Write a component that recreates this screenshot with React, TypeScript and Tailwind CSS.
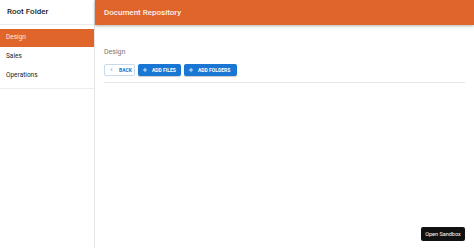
import { ChevronLeft, Plus } from "lucide-react";

const folders = ["Design", "Sales", "Operations"];

const App: React.FC = () => {
  return (
    <div className="relative flex h-[248px] w-[474px] overflow-hidden bg-white font-['Roboto',sans-serif]">
      <div className="flex w-[95px] shrink-0 flex-col border-r border-[#e4e4e4]">
        <div className="flex h-[25px] items-center border-b border-[#ececec] pl-[7px] text-[8px] font-medium text-[#222]">
          Root Folder
        </div>
        <div className="flex flex-col border-b border-[#ececec] pt-[4px] pb-[3px]">
          {folders.map((f, i) => (
            <div
              key={f}
              className={
                i === 0
                  ? "flex h-[18px] items-center bg-[#e0652a] pl-[6px] text-[6.5px] text-[#ffe9dc]"
                  : "flex h-[19px] items-center pl-[6px] text-[6.5px] text-[#222]"
              }
            >
              {f}
            </div>
          ))}
        </div>
      </div>

      <div className="flex flex-1 flex-col">
        <div className="flex h-[25px] items-center bg-[#e0652a] pl-[9px] text-[8px] font-medium text-[#fff3ea] shadow-[0_1px_3px_rgba(0,0,0,0.3)]">
          Document Repository
        </div>
        <div className="flex flex-col px-[9px] pt-[22px]">
          <div className="text-[7px] text-[#777]">Design</div>
          <div className="mt-[6px] flex gap-[3px] border-b border-[#e6e6e6] pb-[6px]">
            <button className="flex h-[12px] w-[31px] items-center gap-[5px] rounded-[2px] border border-[#c9d9ee] pl-[4px] text-[6px] leading-[12px] font-bold text-[#1976d2]">
              <ChevronLeft size={5} strokeWidth={2.5} className="shrink-0" />
              <span className="text-[5px]">BACK</span>
            </button>
            <button className="flex h-[12px] w-[43px] items-center gap-[4px] rounded-[2px] bg-[#1976d2] pl-[4px] text-[6px] leading-[12px] font-bold text-white shadow-[0_1px_1px_rgba(0,0,0,0.2)]">
              <Plus size={6} strokeWidth={3} className="shrink-0" />
              <span className="text-[5px]">ADD FILES</span>
            </button>
            <button className="flex h-[12px] w-[53px] items-center gap-[4px] rounded-[2px] bg-[#1976d2] pl-[4px] text-[6px] leading-[12px] font-bold text-white shadow-[0_1px_1px_rgba(0,0,0,0.2)]">
              <Plus size={6} strokeWidth={3} className="shrink-0" />
              <span className="text-[5px]">ADD FOLDERS</span>
            </button>
          </div>
        </div>
      </div>

      <div className="absolute right-[9px] bottom-[7px] flex h-[14px] w-[44px] items-center justify-center rounded-[2px] bg-[#111] text-[5.5px] leading-[14px] text-white">
        Open Sandbox
      </div>
    </div>
  );
};

export default App;
